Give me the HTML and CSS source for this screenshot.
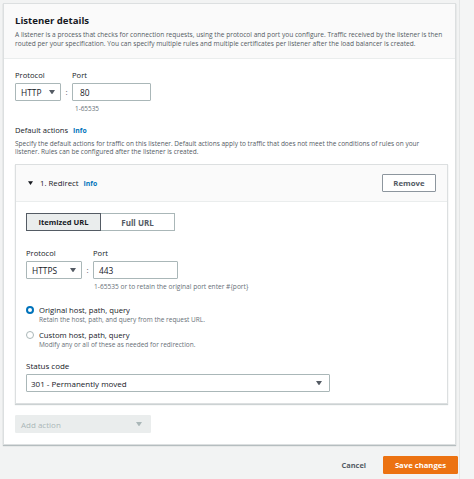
FILE: index.html
```html
<!DOCTYPE html>
<html lang="en">
<head>
<meta charset="utf-8">
<title>Listener details</title>
<link rel="stylesheet" href="styles.css">
</head>
<body>
<div class="layout">
  <div class="main">
    <section class="card">
      <header class="card-head">
        <h2 class="card-title">Listener details</h2>
        <p class="desc head-desc">A listener is a process that checks for connection requests, using the protocol and port you configure. Traffic received by the listener is then<br>routed per your specification. You can specify multiple rules and multiple certificates per listener after the load balancer is created.</p>
      </header>
      <div class="card-body">
        <div class="proto-row">
          <div class="field">
            <div class="lbl">Protocol</div>
            <div class="select w-http"><span>HTTP</span><svg class="caret" viewBox="0 0 8 6"><polygon points="0,0 8,0 4,6"/></svg></div>
          </div>
          <span class="colon">:</span>
          <div class="field">
            <div class="lbl">Port</div>
            <div class="input w-port1">80</div>
            <div class="hint">1-65535</div>
          </div>
        </div>

        <div class="section-label">Default actions <span class="info">Info</span></div>
        <p class="desc sec-desc">Specify the default actions for traffic on this listener. Default actions apply to traffic that does not meet the conditions of rules on your<br>listener. Rules can be configured after the listener is created.</p>

        <div class="action">
          <div class="action-head">
            <div class="action-title">
              <svg class="tri" viewBox="0 0 8 6"><polygon points="0,0 8,0 4,6"/></svg>
              <span>1. Redirect</span>
              <span class="info">Info</span>
            </div>
            <button class="btn">Remove</button>
          </div>
          <div class="action-body">
            <div class="seg">
              <span class="seg-btn on">Itemized URL</span>
              <span class="seg-btn">Full URL</span>
            </div>

            <div class="proto-row row2">
              <div class="field">
                <div class="lbl">Protocol</div>
                <div class="select w-https"><span>HTTPS</span><svg class="caret" viewBox="0 0 8 6"><polygon points="0,0 8,0 4,6"/></svg></div>
              </div>
              <span class="colon">:</span>
              <div class="field">
                <div class="lbl">Port</div>
                <div class="input w-port2">443</div>
                <div class="hint">1-65535 or to retain the original port enter #{port}</div>
              </div>
            </div>

            <div class="radios">
              <div class="radio">
                <span class="dot on"></span>
                <div>
                  <div class="r-label">Original host, path, query</div>
                  <div class="r-sub">Retain the host, path, and query from the request URL.</div>
                </div>
              </div>
              <div class="radio">
                <span class="dot"></span>
                <div>
                  <div class="r-label">Custom host, path, query</div>
                  <div class="r-sub">Modify any or all of these as needed for redirection.</div>
                </div>
              </div>
            </div>

            <div class="lbl status-lbl">Status code</div>
            <div class="select w-status"><span>301 - Permanently moved</span><svg class="caret" viewBox="0 0 8 6"><polygon points="0,0 8,0 4,6"/></svg></div>
          </div>
        </div>

        <div class="select disabled w-add"><span>Add action</span><svg class="caret" viewBox="0 0 8 6"><polygon points="0,0 8,0 4,6"/></svg></div>
      </div>
    </section>
    <footer class="foot">
      <span class="cancel">Cancel</span>
      <button class="primary">Save changes</button>
    </footer>
  </div>
  <div class="side"></div>
</div>
</body>
</html>
```

FILE: styles.css
```css
* { box-sizing: border-box; }
html, body { margin: 0; padding: 0; }
body {
  background: #f2f3f3;
  font-family: "Open Sans", "Noto Sans", sans-serif;
  color: #16191f;
  width: 474px;
  height: 479px;
  overflow: hidden;
}
.layout { display: flex; height: 479px; }
.main { width: 459px; padding: 3px 0 0 3px; }
.side { flex: 1; border-left: 1px solid #e4e6e6; background: #f4f5f5; }

.card {
  width: 453px;
  background: #fff;
  border: 1px solid #dcdfe0;
  box-shadow: 0 1px 1px rgba(0,28,36,.25);
}
.card-head {
  background: #fafafa;
  border-bottom: 1px solid #eaeded;
  padding: 11px 11px 10px;
}
.card-title {
  margin: 0;
  font-size: 9.6px;
  line-height: 12px;
  font-weight: 700;
}
.desc {
  margin: 0;
  color: #545b64;
  white-space: nowrap;
}
.head-desc { font-size: 6.6px; line-height: 9px; margin-top: 3px; }
.card-body { padding: 11px 8px 11px 11px; }

.proto-row { display: flex; align-items: flex-start; }
.field { display: flex; flex-direction: column; }
.lbl { font-size: 7.6px; line-height: 10px; margin-bottom: 3px; }
.colon { width: 11px; text-align: center; font-size: 8px; margin-top: 17px; line-height: 10px; color: #545b64; }
.hint { font-size: 6.4px; line-height: 8px; margin-top: 4px; color: #687078; padding-left: 3px; white-space: nowrap; }

.select, .input {
  height: 18px;
  border: 1px solid #aab7b8;
  border-radius: 1px;
  font-size: 8.4px;
  display: flex;
  align-items: center;
  padding: 0 5px;
  background: #fff;
}
.select { justify-content: space-between; }
.caret { width: 6px; height: 4.5px; fill: #545b64; flex: none; }
.w-http { width: 46px; }
.w-port1 { width: 79px; padding-left: 7px; }
.w-https { width: 56px; }
.w-port2 { width: 85px; }
.w-status { width: 304px; padding-right: 7px; padding-left: 4px; font-size: 8px; }
.w-add { width: 136px; margin-top: 11px; padding-right: 8px; font-size: 8px; }
.select.disabled { background: #eaeded; border-color: #eaeded; color: #aab7b8; }
.select.disabled .caret { fill: #aab7b8; }

.section-label { font-size: 7.6px; line-height: 10px; margin-top: 12px; }
.info { color: #0073bb; font-weight: 700; font-size: 6.8px; margin-left: 3px; }
.sec-desc { font-size: 6.5px; line-height: 8px; margin-top: 4px; }

.action {
  margin-top: 8px;
  width: 433px;
  border: 1px solid #dcdfe0;
  box-shadow: 0 1px 1px rgba(0,28,36,.2);
}
.action-head {
  background: #fafafa;
  border-bottom: 1px solid #eaeded;
  padding: 9px 11px 9px 12px;
  display: flex;
  justify-content: space-between;
  align-items: center;
}
.action-title { display: flex; align-items: center; font-size: 7.8px; }
.action-title .info { margin-left: 5px; }
.tri { width: 5px; height: 4px; fill: #16191f; margin-right: 7px; }
.btn {
  width: 54px;
  height: 18px;
  border: 1px solid #8d969e;
  border-radius: 1px;
  background: #fff;
  color: #545b64;
  font-family: inherit;
  font-weight: 700;
  font-size: 7.8px;
  padding: 0;
}
.action-body { padding: 11px 10px 11px 10px; }

.seg { display: flex; }
.seg-btn {
  width: 75px;
  height: 18px;
  border: 1px solid #aab7b8;
  display: flex;
  align-items: center;
  justify-content: center;
  font-size: 7.6px;
  font-weight: 700;
  color: #545b64;
}
.seg-btn.on { background: #eaeded; border: 1.5px solid #545b64; color: #16191f; }
.seg-btn + .seg-btn { border-left: 0; width: 74px; font-size: 8px; }

.row2 { margin-top: 17px; }
.row2 .hint { padding-left: 1px; font-size: 6.6px; }

.radios { margin-top: 14px; }
.radio { display: flex; align-items: flex-start; }
.radio + .radio { margin-top: 6px; }
.dot {
  width: 8px; height: 8px;
  border-radius: 50%;
  border: 1px solid #aab7b8;
  margin: 1px 5px 0 0;
  flex: none;
  background: #fff;
}
.dot.on { border: 2.5px solid #0073bb; }
.r-label { font-size: 7.7px; line-height: 10px; }
.r-sub { font-size: 6.5px; line-height: 8px; color: #687078; margin-top: 1px; }

.status-lbl { margin-top: 12px; font-size: 8px; }

.foot {
  display: flex;
  justify-content: flex-end;
  align-items: center;
  padding: 11px 1px 0 0;
}
.cancel { font-size: 7.4px; font-weight: 700; color: #545b64; margin-right: 17px; }
.primary {
  width: 75px;
  height: 18px;
  background: #ec7211;
  border: 1px solid #ec7211;
  border-radius: 1px;
  color: #fff;
  font-family: inherit;
  font-weight: 700;
  font-size: 7.7px;
  padding: 0;
}
```
